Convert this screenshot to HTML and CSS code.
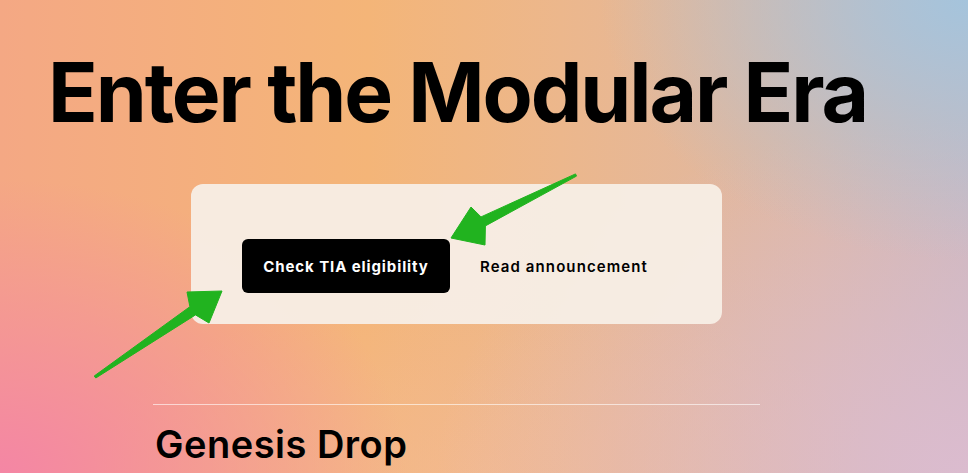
FILE: index.html
```html
<!DOCTYPE html>
<html lang="en">
<head>
<meta charset="utf-8">
<title>Enter the Modular Era</title>
<link rel="stylesheet" href="styles.css">
</head>
<body>
<main class="page">
  <h1 class="title">Enter the Modular Era</h1>
  <section class="content">
    <div class="card">
      <a class="btn-primary" href="#">Check TIA eligibility</a>
      <a class="btn-link" href="#">Read announcement</a>
    </div>
    <hr class="divider">
    <h2 class="subtitle">Genesis Drop</h2>
  </section>
</main>
<svg class="arrows" width="968" height="473" viewBox="0 0 968 473" aria-hidden="true">
  <polygon class="arrow" points="575.5,173.9 481,216.9 471,207 451,238 485,245 485.4,225.9 576.5,176.1"/>
  <polygon class="arrow" points="94.2,376 189.9,306.7 187,292 222,291 209,323 195.5,314.9 95.8,378"/>
</svg>
</body>
</html>
```

FILE: styles.css
```css
html, body {
  margin: 0;
  padding: 0;
  height: 100%;
  overflow: hidden;
}
body {
  font-family: Inter, "Liberation Sans", sans-serif;
  color: #000;
  background:
    radial-gradient(ellipse 42% 62% at 0% 100%, rgba(244,132,166,0.95), rgba(244,132,166,0) 100%),
    radial-gradient(ellipse 38% 55% at 100% 0%, rgba(165,196,220,1), rgba(165,196,220,0) 100%),
    radial-gradient(ellipse 55% 75% at 100% 100%, rgba(220,188,208,0.95), rgba(220,188,208,0) 100%),
    radial-gradient(ellipse 40% 40% at 50% 100%, rgba(244,186,146,0.7), rgba(244,186,146,0) 100%),
    linear-gradient(90deg, #f4a884 0%, #f4b578 38%, #ecb78c 58%, #dcb8a8 85%, #ccb8bc 100%);
  position: relative;
  width: 968px;
  height: 473px;
}
.page {
  padding: 52px 0 0 48px;
}
.title {
  margin: 0;
  font-size: 82px;
  line-height: 1;
  font-weight: 700;
  letter-spacing: -2.1px;
}
.content {
  margin: 50px 0 0 105px;
  width: 607px;
}
.card {
  margin-left: 38px;
  width: 531px;
  box-sizing: border-box;
  padding: 55px 51px 31px;
  background: rgba(247,238,230,0.95);
  border-radius: 12px;
  display: flex;
  align-items: center;
  gap: 30px;
}
.btn-primary {
  display: flex;
  align-items: center;
  justify-content: center;
  width: 208px;
  height: 54px;
  background: #000;
  color: #fff;
  border-radius: 6px;
  font-size: 15px;
  font-weight: 700;
  letter-spacing: 0.9px;
  text-decoration: none;
}
.btn-link {
  color: #000;
  font-size: 15px;
  font-weight: 600;
  letter-spacing: 1.1px;
  text-decoration: none;
}
.divider {
  margin: 80px 0 0;
  border: 0;
  height: 1px;
  background: rgba(255,255,255,0.6);
}
.subtitle {
  margin: 20px 0 0 2px;
  font-size: 38px;
  line-height: 1;
  font-weight: 600;
  letter-spacing: 0.5px;
}
.arrows {
  position: absolute;
  left: 0;
  top: 0;
  pointer-events: none;
}
.arrow {
  fill: #21b31f;
  stroke: #21b31f;
  stroke-width: 1;
  stroke-linejoin: round;
}
```
